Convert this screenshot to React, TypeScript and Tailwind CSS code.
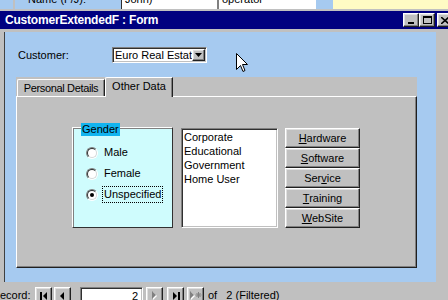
import React from "react";

const raised =
  "border border-t-white border-l-white border-b-[#202020] border-r-[#202020] shadow-[inset_-1px_-1px_0_#808080,inset_1px_1px_0_#dfdfdf] bg-[#c0c0c0]";
const sunken =
  "border border-t-[#808080] border-l-[#808080] border-b-white border-r-white shadow-[inset_1px_1px_0_#303030,inset_-1px_-1px_0_#c0c0c0]";

function Radio({ checked }: { checked?: boolean }) {
  return (
    <div className="w-[12px] h-[12px] shrink-0 rounded-full border border-t-[#808080] border-l-[#808080] border-b-white border-r-white">
      <div className="w-full h-full rounded-full border border-t-[#303030] border-l-[#303030] border-b-[#d8d8d8] border-r-[#d8d8d8] bg-white flex items-center justify-center">
        {checked && <div className="w-[4px] h-[4px] rounded-full bg-black" />}
      </div>
    </div>
  );
}

function RadioRow({ label, checked, focus }: { label: string; checked?: boolean; focus?: boolean }) {
  return (
    <div className="h-[21px] flex items-center pl-[13px]">
      <Radio checked={checked} />
      <span
        className={
          "ml-[4px] px-[1px] py-[1px] leading-[13px] border " +
          (focus ? "border-dotted border-black" : "border-transparent")
        }
      >
        {label}
      </span>
    </div>
  );
}

function CmdButton({ pre, acc, post }: { pre: string; acc: string; post: string }) {
  return (
    <div className={"h-[20px] flex items-center justify-center " + raised}>
      <span className="leading-[13px]">
        {pre}
        <span className="underline underline-offset-[1px]">{acc}</span>
        {post}
      </span>
    </div>
  );
}

function NavBtn({ children }: { children: React.ReactNode }) {
  return <div className={"w-[17px] h-[17px] flex items-center justify-center shrink-0 " + raised}>{children}</div>;
}

export default function App() {
  return (
    <div className="relative w-[448px] h-[300px] overflow-hidden flex flex-col bg-[#c0c0c0] font-['Liberation_Sans',Arial,sans-serif] text-[11px] leading-[13px] text-black">
      {/* top strip of the window behind */}
      <div className="h-[9px] shrink-0 flex bg-[#a6caf0] overflow-hidden">
        <div className="w-[13px]" />
        <div className="w-[2px] bg-[#c0c0c0]" />
        <div className="w-[13px]" />
        <div className="w-[93px] -mt-[7px] whitespace-nowrap">Name (F/J):</div>
        <div className="w-[96px] bg-white border-l border-[#303030] overflow-hidden">
          <div className="-mt-[7px] pl-[3px] whitespace-nowrap">John)</div>
        </div>
        <div className="w-[2px] bg-[#808080]" />
        <div className="w-[97px] bg-white overflow-hidden">
          <div className="-mt-[7px] pl-[3px] whitespace-nowrap">operator</div>
        </div>
        <div className="w-[17px]" />
        <div className="flex-1 bg-[#fffbc4]" />
      </div>
      <div className="h-[2px] shrink-0 bg-[#c0c0c0]" />
      {/* title bar */}
      <div className="h-[18px] shrink-0 bg-[#000080] flex items-center overflow-hidden">
        <span className="pl-[5px] text-white font-bold text-[12px] tracking-[-0.2px] whitespace-nowrap">CustomerExtendedF : Form</span>
        <div className="ml-auto mr-[-5px] flex items-center">
          <div className={"w-[16px] h-[14px] flex items-end justify-center pb-[2px] " + raised}>
            <div className="w-[6px] h-[2px] bg-black mr-[1px]" />
          </div>
          <div className={"w-[16px] h-[14px] flex items-center justify-center " + raised}>
            <div className="w-[9px] h-[8px] border border-black border-t-2" />
          </div>
          <div className={"ml-[2px] w-[16px] h-[14px] flex items-center justify-center " + raised}>
            <svg width="8" height="7" viewBox="0 0 8 7">
              <path d="M0 0 L8 7 M8 0 L0 7" stroke="black" strokeWidth="1.6" />
            </svg>
          </div>
        </div>
      </div>
      <div className="h-[3px] shrink-0 bg-[#c0c0c0]" />

      {/* body */}
      <div className="flex-1 flex min-h-0">
        <div className="w-[4px] bg-[#c0c0c0]" />
        <div className="w-[1px] bg-[#404040]" />
        <div className="w-[431px] bg-[#a6caf0] pt-[15px] pl-[11px] flex flex-col">
          {/* customer row */}
          <div className="h-[16px] flex items-center">
            <span className="w-[96px] pl-[2px]">Customer:</span>
            <div className={"w-[95px] h-[16px] bg-white flex items-center pl-[2px] pr-[1px] " + sunken}>
              <span className="flex-1 overflow-hidden whitespace-nowrap">Euro Real Estate</span>
              <div className={"w-[13px] h-[12px] flex items-center justify-center shrink-0 " + raised}>
                <svg width="7" height="4" viewBox="0 0 7 4">
                  <path d="M0 0 H7 L3.5 4 Z" fill="black" />
                </svg>
              </div>
            </div>
          </div>

          {/* tab control */}
          <div className="mt-[14px] w-[401px] h-[191px] flex flex-col bg-[#c0c0c0]">
            <div className="h-[19px] flex items-end shrink-0">
              <div className="ml-[1px] w-[88px] h-[17px] border-t border-l border-white border-r border-r-[#202020] shadow-[inset_-1px_0_0_#808080] rounded-tl-[2px] flex items-center justify-center tracking-[-0.35px]">
                Personal Details
              </div>
              <div className="relative z-10 w-[68px] h-[20px] -mb-[1px] bg-[#c0c0c0] border-t border-l border-white border-r border-r-[#202020] shadow-[inset_-1px_0_0_#808080] rounded-tl-[2px] flex items-start justify-center pt-[2px]">
                Other Data
              </div>
            </div>
            <div className="flex-1 border border-t-white border-l-white border-b-[#202020] border-r-[#202020] shadow-[inset_-1px_-1px_0_#808080] pt-[30px] pl-[55px] flex items-start">
              {/* gender group */}
              <div className="relative w-[101px] h-[101px] bg-[#cffcfd] border border-t-white border-l-white border-b-[#303030] border-r-[#303030] shadow-[inset_1px_1px_0_#808080] pt-[14px] flex flex-col">
                <div className="absolute left-[8px] -top-[5px] h-[13px] px-[1px] bg-[#12b4ef] leading-[13px]">Gender</div>
                <RadioRow label="Male" />
                <RadioRow label="Female" />
                <RadioRow label="Unspecified" checked focus />
              </div>
              {/* list box */}
              <div className={"ml-[8px] mt-[1px] w-[97px] h-[100px] bg-white pl-[2px] pt-[1px] leading-[14px] " + sunken}>
                <div>Corporate</div>
                <div>Educational</div>
                <div>Government</div>
                <div>Home User</div>
              </div>
              {/* buttons */}
              <div className="ml-[7px] mt-[1px] w-[75px] flex flex-col">
                <CmdButton pre="" acc="H" post="ardware" />
                <CmdButton pre="" acc="S" post="oftware" />
                <CmdButton pre="Ser" acc="v" post="ice" />
                <CmdButton pre="" acc="T" post="raining" />
                <CmdButton pre="" acc="W" post="ebSite" />
              </div>
            </div>
          </div>
        </div>
        <div className="flex-1 bg-[#c0c0c0]" />
      </div>

      {/* navigation bar */}
      <div className="h-[18px] shrink-0 bg-[#c0c0c0] flex items-start pt-[5px] overflow-hidden">
        <span className="ml-[-8px] w-[43px] pt-[2px] whitespace-nowrap">Record:</span>
        <NavBtn>
          <svg width="8" height="8" viewBox="0 0 8 8">
            <rect x="0" y="0" width="2" height="8" fill="black" />
            <path d="M7 0 L3 4 L7 8 Z" fill="black" />
          </svg>
        </NavBtn>
        <div className="ml-[2px]">
          <NavBtn>
            <svg width="5" height="8" viewBox="0 0 5 8">
              <path d="M4 0 L0 4 L4 8 Z" fill="black" />
            </svg>
          </NavBtn>
        </div>
        <div className={"ml-[9px] w-[63px] h-[17px] bg-white text-right pr-[4px] pt-[2px] " + sunken}>2</div>
        <div className="ml-[3px]">
          <NavBtn>
            <svg width="6" height="9" viewBox="0 0 6 9">
              <path d="M1 1 L5 5 L1 9 Z" fill="white" />
              <path d="M0 0 L4 4 L0 8 Z" fill="#808080" />
            </svg>
          </NavBtn>
        </div>
        <div className="ml-[4px]">
          <NavBtn>
            <svg width="8" height="8" viewBox="0 0 8 8">
              <path d="M1 0 L5 4 L1 8 Z" fill="black" />
              <rect x="6" y="0" width="2" height="8" fill="black" />
            </svg>
          </NavBtn>
        </div>
        <div className="ml-[3px]">
          <NavBtn>
            <svg width="12" height="9" viewBox="0 0 12 9">
              <path d="M1 1 L5 5 L1 9 Z" fill="white" />
              <path d="M0 0 L4 4 L0 8 Z" fill="#808080" />
              <path d="M8.5 1 V7 M5.5 4 H11.5 M6.5 2 L10.5 6 M10.5 2 L6.5 6" stroke="#808080" strokeWidth="1" />
            </svg>
          </NavBtn>
        </div>
        <span className="ml-[4px] pt-[2px] whitespace-nowrap">of&nbsp;&nbsp;&nbsp;2 (Filtered)</span>
      </div>

      {/* mouse cursor */}
      <svg className="absolute left-[236px] top-[53px]" width="12" height="20" viewBox="0 0 12 20">
        <path d="M0.5 0.5 L0.5 16.5 L4.5 12.5 L7 18.5 L9 17.5 L6.5 11.5 L11.5 11.5 Z" fill="white" stroke="black" strokeWidth="1" />
      </svg>
    </div>
  );
}
